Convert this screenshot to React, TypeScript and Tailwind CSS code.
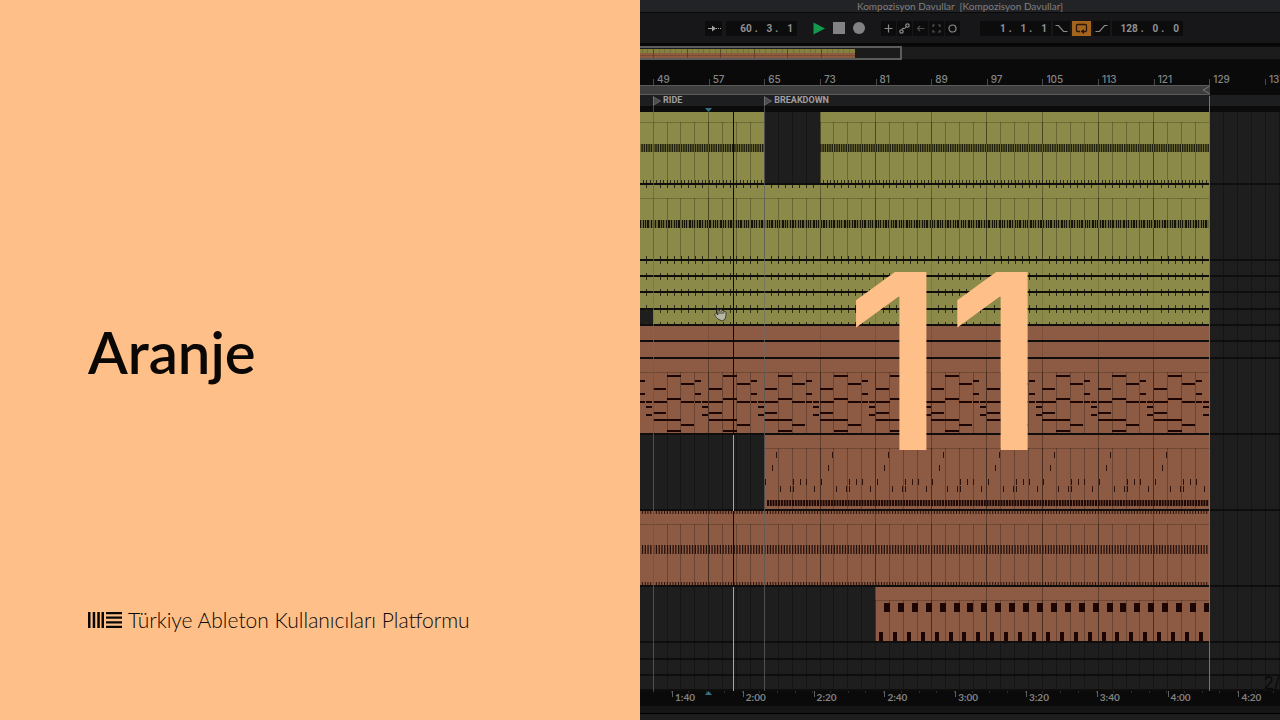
import type { ReactNode } from 'react';
import clsx from 'clsx';

// The timeline is drawn in a 640 unit wide space that stretches with the panel
const VIEW = 640;
const BAR = 6.955;
const END = 569;

const barX = (bar: number) => 13 + (bar - 49) * BAR;
const pct = (units: number) => `${(units / VIEW) * 100}%`;

function ticks(from: number, to: number, step: number, y: number, w: number, h: number, skip = 0) {
  let d = '';
  const first = Math.ceil((from - 13) / step);
  for (let i = first; 13 + i * step < to - 1; i++) {
    if (skip && i % skip === 0) continue;
    const raw = 13 + i * step;
    const x = step > 3 ? Math.round(raw) : Math.round(raw * 10) / 10;
    d += `M${x} ${y}h${w}v${h}h${-w}z`;
  }
  return d;
}

function gridPath(from: number, to: number, bars: number, y: number, h: number) {
  let d = '';
  for (let bar = 47; barX(bar) < to; bar += 2) {
    if ((bar - 49) % bars !== 0) continue;
    const x = Math.round(barX(bar) - 0.4);
    if (x >= from && x < to) d += `M${x} ${y}h1v${h}h-1z`;
  }
  return d;
}

// Notes of one eight bar phrase: x, y, width
const MELODY = [
  [0, 29, 13], [14, 16, 14], [28, 24, 13], [42, 21, 6], [42, 34, 6],
  [14, 39, 14], [0, 42, 14], [28, 42, 13], [42, 42, 6], [49, 42, 6],
  [49, 47, 6], [49, 55, 6], [0, 53, 13], [0, 60, 28], [28, 65, 13], [14, 71, 14],
];

const PERCUSSION = [
  [12, 17], [8, 30], [1, 44], [29, 44], [36, 44], [42, 44],
  [16, 51], [26, 51], [29, 51], [50, 51],
];

function phrase(notes: number[][], from: number, h: number) {
  let d = '';
  for (let bar = 41; bar < 129; bar += 8) {
    for (const [nx, ny, nw = 1] of notes) {
      const x = Math.round(barX(bar)) + nx;
      const start = Math.max(x, from);
      const w = Math.min(x + nw, END) - start;
      if (w > 0) d += `M${start} ${ny}h${w}v${h}h${-w}z`;
    }
  }
  return d;
}

function denseBand() {
  let d = '';
  let x = 0;
  let i = 0;
  const widths = [1, 2, 1, 1, 3, 1, 2];
  while (x < END - 3) {
    const w = widths[(i * 5 + (i >> 2)) % 7];
    d += `M${x} 35h${w}v8h${-w}z`;
    x += w + (i % 3 === 0 ? 2 : 1);
    i++;
  }
  return d;
}

function stabs() {
  let d = '';
  for (let x = 239; x < END - 5; x += BAR * 2) {
    const left = Math.round(x);
    d += `M${left + 5} 16h${Math.min(6, END - left - 5)}v9H${left + 5}zM${left} 45h4v9h-4z`;
  }
  return d;
}

interface Track {
  name: string;
  size: string;
  height: number;
  tone?: 'olive' | 'brown';
  clips?: number[][];
  header?: number;
  notes?: ReactNode;
}

const edgeTicks = (
  <path d={ticks(0, END, BAR, 0, 1, 3, 8) + ticks(0, END, BAR, 12, 1, 3, 8)} fill="#2f2e14" />
);

const TRACKS: Track[] = [
  {
    name: 'Hats', size: 'h-[73px]', height: 73, tone: 'olive', header: 10,
    clips: [[0, 124], [180, END]],
    notes: (
      <>
        <path d="M0 32h124v8h-124zM180 32h389v8h-389z" fill="#77763d" />
        <path d={ticks(0, 124, 2.32, 32, 1.4, 8) + ticks(180, END, 2.32, 32, 1.4, 8)} fill="#201f0c" />
        <path d={ticks(0, 124, BAR / 2, 68, 1, 3) + ticks(180, END, BAR / 2, 68, 1, 3)} fill="#2b2a12" />
      </>
    ),
  },
  {
    name: 'Shaker', size: 'h-[76px]', height: 76, tone: 'olive', header: 13,
    clips: [[0, END]],
    notes: (
      <>
        <path d={ticks(0, END, BAR, 0, 1, 3, 8) + ticks(0, END, BAR, 71, 1, 3, 8)} fill="#282711" />
        <path d="M0 35h569v8h-569z" fill="#68673a" />
        <path d={denseBand()} fill="#151407" />
      </>
    ),
  },
  { name: 'Clap', size: 'h-4', height: 16, tone: 'olive', clips: [[0, END]], notes: edgeTicks },
  { name: 'Snare', size: 'h-4', height: 16, tone: 'olive', clips: [[0, END]], notes: edgeTicks },
  { name: 'Tom', size: 'h-[17px]', height: 17, tone: 'olive', clips: [[0, END]], notes: edgeTicks },
  { name: 'Ride', size: 'h-4', height: 16, tone: 'olive', clips: [[13, END]], notes: edgeTicks },
  { name: 'Pad', size: 'h-4', height: 16, tone: 'brown', clips: [[0, END]] },
  { name: 'Strings', size: 'h-[17px]', height: 17, tone: 'brown', clips: [[0, END]] },
  {
    name: 'Chords', size: 'h-[76px]', height: 76, tone: 'brown', header: 13,
    clips: [[0, END]],
    notes: <path d={phrase(MELODY, 0, 2)} fill="#1d0503" />,
  },
  {
    name: 'Percussion', size: 'h-[76px]', height: 76, tone: 'brown', header: 13,
    clips: [[125, END]],
    notes: (
      <>
        <path d={phrase(PERCUSSION, 125, 6)} fill="#2d110a" />
        <path d={ticks(125, END, 2.78, 65, 2, 6)} fill="#1d0805" />
      </>
    ),
  },
  {
    name: 'Bass', size: 'h-[76px]', height: 76, tone: 'brown', header: 13,
    clips: [[0, END]],
    notes: (
      <>
        <path d={ticks(0, END, 2.78, 0, 1, 3) + ticks(0, END, 2.78, 71, 1, 3)} fill="#260f09" />
        <path d={ticks(0, END, 2.78, 34, 1.3, 9)} fill="#26100a" />
      </>
    ),
  },
  {
    name: 'Stabs', size: 'h-14', height: 56, tone: 'brown', header: 13,
    clips: [[235, END]],
    notes: <path d={stabs()} fill="#1d0503" />,
  },
  { name: 'Return A', size: 'h-[17px]', height: 17 },
  { name: 'Return B', size: 'h-4', height: 16 },
  { name: 'Master', size: 'h-[15px]', height: 15 },
];

function Lane({ track }: { track: Track }) {
  const { height, clips = [], header, tone } = track;
  const body = height - 2;
  return (
    <div className={clsx('border-b-2 border-[#0f0e0c]', track.size)}>
      <svg viewBox={`0 0 ${VIEW} ${body}`} preserveAspectRatio="none" className="block h-full w-full" aria-label={track.name}>
        <path d={gridPath(0, VIEW, 2, 0, body)} fill="#151515" />
        {clips.map(([from, to]) => (
          <g key={from}>
            <rect x={from} width={to - from} height={body} fill={tone === 'olive' ? '#8b8a48' : '#8d5b44'} />
            <path d={gridPath(from, to, 8, 0, body)} fill="#000" opacity={header ? 0.3 : 0.12} />
            {header && (
              <>
                <path d={`M${from} ${header}h${to - from}v1h${from - to}z`} fill="#000" opacity={0.2} />
                <path d={gridPath(from, to, 2, header, body - header)} fill="#000" opacity={0.25} />
              </>
            )}
          </g>
        ))}
        {track.notes}
      </svg>
    </div>
  );
}

function ToolButton({ label, children }: { label: string; children: ReactNode }) {
  return (
    <button type="button" aria-label={label} className="flex h-[15px] w-[15px] items-center justify-center bg-[#0c0c0d] text-[#8b8b8b]">
      <svg viewBox="0 0 15 15" className="h-[15px] w-[15px]" fill="none" stroke="currentColor" strokeWidth="1.2">
        {children}
      </svg>
    </button>
  );
}

function Counter({ values }: { values: string[] }) {
  return (
    <div className="flex h-[15px] w-[71px] items-center justify-end gap-[9px] bg-[#0c0c0d] pr-1 font-['Roboto',sans-serif] text-[10px] leading-[15px] font-bold text-[#919191]">
      {values.map((value, i) => (
        <span key={i} className="flex gap-[3px]">
          <span>{value}</span>
          {i < values.length - 1 && <span>.</span>}
        </span>
      ))}
    </div>
  );
}

function Transport() {
  return (
    <div className="flex h-[30px] items-center bg-[#17171a] pl-16">
      <div className="ml-px flex items-center gap-1">
        <button type="button" aria-label="Follow" className="h-[15px] w-[17px] bg-[#0c0c0d] text-[#a0a0a0]">
          <svg viewBox="0 0 17 15" className="h-[15px] w-[17px]">
            <path d="M3 7h4V4.5l4 3-4 3V8H3z" fill="currentColor" />
            <path d="M11 7.5h1M13 7.5h1M15 7.5h1" stroke="currentColor" />
          </svg>
        </button>
        <Counter values={['60', '3', '1']} />
      </div>
      <div className="ml-4 flex items-center gap-2">
        <button type="button" aria-label="Play">
          <svg viewBox="0 0 12 13" className="h-[13px] w-3"><path d="M0.5 0.5L12 6.5 0.5 12.5z" fill="#139a4c" /></svg>
        </button>
        <button type="button" aria-label="Stop" className="h-3 w-3 bg-[#828284]" />
        <button type="button" aria-label="Record" className="h-3 w-3 rounded-full bg-[#828284]" />
      </div>
      <div className="ml-4 flex items-center gap-px">
        <ToolButton label="Overdub"><path d="M7.5 3.5v8M3.5 7.5h8" /></ToolButton>
        <ToolButton label="Automation arm">
          <circle cx="4.5" cy="10.5" r="1.7" />
          <circle cx="10.5" cy="4.5" r="1.7" />
          <path d="M5 8.5C6 5.5 7 9.5 9 6" />
        </ToolButton>
        <ToolButton label="Re-enable automation"><path d="M11.5 7.5h-7M7 5L4.500 7.5 7 10" stroke="#4a4a4a" /></ToolButton>
        <ToolButton label="Capture"><path d="M4 6V4h2M9 4h2v2M11 9v2H9M6 11H4V9" stroke="#555" /></ToolButton>
        <ToolButton label="Session record"><circle cx="7.5" cy="7.5" r="3.5" /></ToolButton>
      </div>
      <div className="ml-5 flex items-center gap-0.5">
        <Counter values={['1', '1', '1']} />
        <button type="button" aria-label="Punch in" className="h-[15px] w-[17px] bg-[#0c0c0d]">
          <svg viewBox="0 0 17 15" className="h-[15px] w-[17px]"><path d="M2.5 4.5h3l5 6h4" fill="none" stroke="#8b8b8b" strokeWidth="1.2" /></svg>
        </button>
        <button type="button" aria-label="Loop" className="h-[15px] w-[19px] bg-[#a5641e]">
          <svg viewBox="0 0 19 15" className="h-[15px] w-[19px]">
            <path d="M8 10.5H5.5Q4.5 10.5 4.5 9.5v-5Q4.5 3.5 5.5 3.5h8Q14.5 3.5 14.5 4.5v5Q14.5 10.5 13.5 10.5h-2" fill="none" stroke="#29170a" strokeWidth="1.3" />
            <path d="M12 8v5l-3.5-2.5z" fill="#29170a" />
          </svg>
        </button>
        <button type="button" aria-label="Punch out" className="h-[15px] w-[17px] bg-[#0c0c0d]">
          <svg viewBox="0 0 17 15" className="h-[15px] w-[17px]"><path d="M2.5 10.5h4l5-6h3" fill="none" stroke="#8b8b8b" strokeWidth="1.2" /></svg>
        </button>
        <Counter values={['128', '0', '0']} />
      </div>
    </div>
  );
}

function Overview() {
  return (
    <div className="flex h-3.5 bg-[#0c0c0c]">
      <div className="border-2 border-l-0 border-[#5c5c5c] bg-[#1b1b1b]" style={{ width: pct(262) }}>
        <svg viewBox="0 0 260 10" preserveAspectRatio="none" className="block h-full w-full">
          <rect y="1" width="215" height="4" fill="#85813f" />
          <rect y="5" width="215" height="5" fill="#8d5b3f" />
          <path d={ticks(0, 215, 5.6, 1, 1, 4)} fill="#4d4b24" opacity="0.3" />
          <path d={ticks(0, 215, 33.6, 1, 1, 9)} fill="#4d2c1c" opacity="0.6" />
          <path d="M0 7h215v1H0z" fill="#4d2c1c" opacity="0.3" />
        </svg>
      </div>
      <div className="my-px flex-1 bg-[#1c1c1c]" />
    </div>
  );
}

function Offset({ units }: { units: number }) {
  return <div className="shrink-0" style={{ width: pct(units) }} />;
}

function BarRuler() {
  const bars = [49, 57, 65, 73, 81, 89, 97, 105, 113, 121, 129, 137];
  return (
    <div className="flex h-[25px] items-end overflow-hidden bg-[#0a0a0a]">
      <Offset units={13} />
      {bars.map((bar) => (
        <div key={bar} className="flex h-3 shrink-0 items-end gap-[3px]" style={{ width: pct(BAR * 8) }}>
          <span className="h-1.5 w-px bg-[#4a4a4a]" />
          <span className="text-[10px] leading-3 font-medium text-[#858585]">{bar}</span>
        </div>
      ))}
    </div>
  );
}

function Locator({ name, bars }: { name: string; bars: number }) {
  return (
    <div className="flex shrink-0 items-center gap-0.5" style={{ width: pct(BAR * bars) }}>
      <svg viewBox="0 0 8 10" className="h-2.5 w-2"><path d="M0.5 1L7.5 5 0.5 9z" fill="#4b4b4b" stroke="#666" /></svg>
      <span className="font-['Roboto',sans-serif] text-[9px] leading-[11px] font-bold text-[#a0a0a0]">{name}</span>
    </div>
  );
}

function LocatorRow() {
  return (
    <>
      <div className="flex h-2.5 border-y border-[#5a5a5a] bg-[#3e3e3e]" style={{ width: pct(570) }}>
        <svg viewBox="0 0 8 8" className="ml-auto h-2 w-2"><path d="M7.5 0.5L1 4l6.5 3.5" fill="none" stroke="#777" /></svg>
      </div>
      <div className="flex h-[11px] bg-[#1d1e20]">
        <Offset units={13} />
        <Locator name="RIDE" bars={16} />
        <Locator name="BREAKDOWN" bars={64} />
      </div>
      <div className="h-1.5 bg-[#0b0b0b]">
        <svg viewBox="0 0 640 6" preserveAspectRatio="none" className="block h-full w-full">
          <path d="M65 2h7l-3.5 4z" fill="#2d7480" />
        </svg>
      </div>
    </>
  );
}

function TimeRuler() {
  const times = ['1:40', '2:00', '2:20', '2:40', '3:00', '3:20', '3:40', '4:00', '4:20'];
  return (
    <div className="relative flex h-[15px] overflow-hidden bg-[#0a0a0a]">
      <Offset units={32} />
      {times.map((time) => (
        <div key={time} className="flex shrink-0 gap-0.5" style={{ width: pct(70.8) }}>
          <span className="h-1.5 w-px bg-[#606060]" />
          <span className="font-['Lato',sans-serif] text-[10px] leading-3 font-bold text-[#828282]">{time}</span>
        </div>
      ))}
      <svg viewBox="0 0 640 5" preserveAspectRatio="none" className="absolute inset-x-0 top-0 h-[5px] w-full">
        <path d="M65 4h7l-3.5-4z" fill="#2d7480" />
        <path d={ticks(0, VIEW, 17.7, 0, 1, 2)} fill="#2c2c2c" />
      </svg>
    </div>
  );
}

function Arrangement() {
  return (
    <div className="relative bg-[#1e1e1e]">
      {TRACKS.map((track) => (
        <Lane key={track.name} track={track} />
      ))}
      <span className="absolute right-0 bottom-0 font-['Inter',sans-serif] text-[17px] leading-4 text-[#090909]">2/</span>
      {/* locator lines, loop end, playhead and hand cursor */}
      <svg viewBox="0 0 640 595" preserveAspectRatio="none" className="pointer-events-none absolute inset-x-0 -top-4 h-[calc(100%+16px)] w-full">
        <path d="M13 0h1v595h-1zM124 0h1v595h-1z" fill="#777" opacity="0.6" />
        <path d="M569 0h1v595h-1z" fill="#737373" />
        <path d="M93 16h1v475h-1z" fill="#0b0806" />
        <path d="M93 339h1v76h-1zM93 491h1v104h-1z" fill="#a5a5a5" />
        <g fill="#b6b6a6" stroke="#24241a" strokeWidth="0.8">
          <path d="M78 223c-2-2-4-4-3-5s2 0 3 1l-1-4c0-2 2-2 2 0l1-1c1-1 2 0 2 1 1-1 2 0 2 1 2-1 2 0 2 2 0 4-1 6-4 7z" />
          <path d="M79 215v3M81 215v3M83 216v2" fill="none" />
        </g>
      </svg>
    </div>
  );
}

export default function App() {
  return (
    <main className="grid min-h-screen grid-cols-2 bg-[#0a0a0a]">
      <section className="flex flex-col justify-end bg-[#ffbf88] pb-21 pl-22 font-['Lato',sans-serif] text-[#0a0705]">
        <h1 className="mb-55 text-[58px] leading-16 font-semibold">Aranje</h1>
        <div className="flex items-center gap-1.5">
          <svg viewBox="0 0 34 16" className="h-4 w-[34px] shrink-0" fill="currentColor">
            <path d="M0 0h2.500v16h-2.500zM4.700 0h2.500v16h-2.500zM9.300 0h2.500v16h-2.500zM13.500 0h2.500v16h-2.500zM18 0h16v2.200h-16zM18 4.600h16v2.200h-16zM18 9.200h16v2.200h-16zM18 13.800h16v2.200h-16z" />
          </svg>
          <p className="text-[21px] leading-8 font-light whitespace-nowrap">Türkiye Ableton Kullanıcıları Platformu</p>
        </div>
      </section>

      <section className="relative flex min-w-0 flex-col overflow-hidden font-['Inter',sans-serif]">
        <header className="h-[13px] border-b border-[#0a0a0a] bg-[#222326] text-center font-['Lato',sans-serif] text-[10px] leading-3 whitespace-pre text-[#808080]">
          {'Kompozisyon Davullar  [Kompozisyon Davullar]'}
        </header>
        <Transport />
        <div className="h-[3px] bg-[#070707]" />
        <Overview />
        <BarRuler />
        <LocatorRow />
        <Arrangement />
        <TimeRuler />
        <div className="h-2 border-b border-black bg-[#151516]" />
        <div className="flex-1 bg-[#1d1d1e]" />

        <div className="absolute inset-0 flex items-center justify-center pt-1 pr-7 font-['Inter',sans-serif] text-[244px] leading-none font-medium text-[#ffbf88]">
          11
        </div>
      </section>
    </main>
  );
}
